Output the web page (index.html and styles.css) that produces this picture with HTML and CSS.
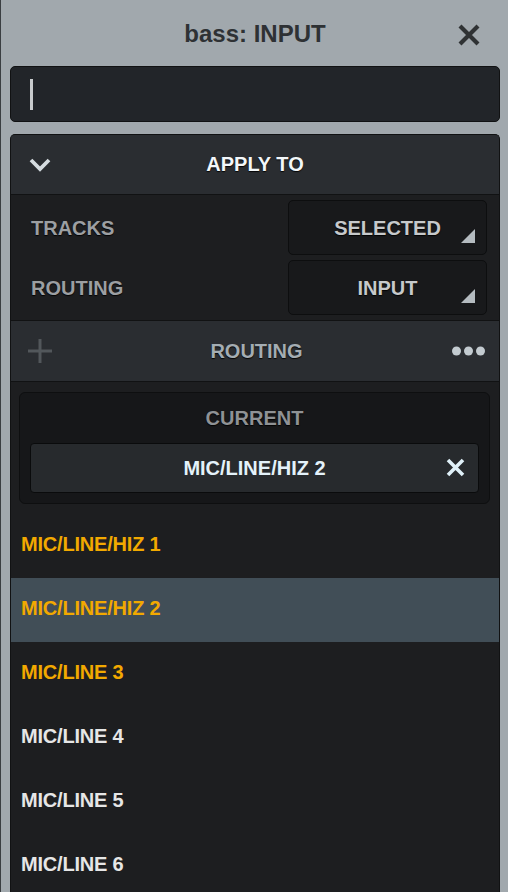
FILE: index.html
```html
<!DOCTYPE html>
<html>
<head>
<meta charset="utf-8">
<link rel="stylesheet" href="styles.css">
</head>
<body>
<div class="app">
  <header class="titlebar">
    <span></span>
    <h1 class="title">bass: INPUT</h1>
    <button class="close" aria-label="Close">
      <svg width="24" height="24" viewBox="0 0 24 24"><path d="M3 3L21 21M21 3L3 21" stroke="#2f3234" stroke-width="4.2" stroke-linecap="butt" fill="none"/></svg>
    </button>
  </header>

  <div class="search"><span class="cursor"></span></div>

  <section class="panel">
    <div class="panel-head">
      <svg class="chev" width="22" height="14" viewBox="0 0 22 14"><path d="M2 2L11 11L20 2" stroke="#d5dce0" stroke-width="3.8" fill="none"/></svg>
      <span class="head-title">APPLY TO</span>
      <span></span>
    </div>

    <div class="apply">
      <span class="label">TRACKS</span>
      <div class="dropdown"><span>SELECTED</span><svg class="tri" width="14" height="14" viewBox="0 0 14 14"><path d="M14 0L14 14L0 14Z" fill="#b4bbc0"/></svg></div>
      <span class="label">ROUTING</span>
      <div class="dropdown"><span>INPUT</span><svg class="tri" width="14" height="14" viewBox="0 0 14 14"><path d="M14 0L14 14L0 14Z" fill="#b4bbc0"/></svg></div>
    </div>

    <div class="routing-head">
      <svg class="plus" width="24" height="24" viewBox="0 0 24 24"><path d="M12 0V24M0 12H24" stroke="#52575b" stroke-width="3" fill="none"/></svg>
      <span class="routing-title">ROUTING</span>
      <svg class="dots" width="33" height="10" viewBox="0 0 33 10"><circle cx="4.5" cy="5" r="4.5" fill="#c3cbd0"/><circle cx="16.5" cy="5" r="4.5" fill="#c3cbd0"/><circle cx="28.5" cy="5" r="4.5" fill="#c3cbd0"/></svg>
    </div>

    <div class="current">
      <div class="current-label">CURRENT</div>
      <div class="current-item">
        <span>MIC/LINE/HIZ 2</span>
        <svg class="x" width="19" height="19" viewBox="0 0 19 19"><path d="M2 2L17 17M17 2L2 17" stroke="#dff0f8" stroke-width="3.6" fill="none"/></svg>
      </div>
    </div>

    <ul class="list">
      <li class="item used">MIC/LINE/HIZ 1</li>
      <li class="item used active">MIC/LINE/HIZ 2</li>
      <li class="item used">MIC/LINE 3</li>
      <li class="item">MIC/LINE 4</li>
      <li class="item">MIC/LINE 5</li>
      <li class="item">MIC/LINE 6</li>
    </ul>
  </section>
</div>
</body>
</html>
```

FILE: styles.css
```css
* { box-sizing: border-box; }

html, body {
  margin: 0;
  padding: 0;
  background: #a1a8ad;
}

body {
  font-family: "Liberation Sans", Arial, sans-serif;
  font-weight: bold;
}

.app {
  width: 508px;
  height: 892px;
  overflow: hidden;
  border-left: 1px solid #3a3e41;
  padding: 0 8px 0 9px;
  display: flex;
  flex-direction: column;
}

.titlebar {
  height: 66px;
  display: grid;
  grid-template-columns: 1fr auto 1fr;
  align-items: center;
}

.title {
  margin: 0;
  font-size: 24px;
  line-height: 28px;
  color: #2e3134;
  padding-top: 2px;
}

.close {
  justify-self: end;
  margin-right: 19px;
  margin-top: 3px;
  background: none;
  border: 0;
  padding: 0;
  width: 24px;
  height: 24px;
  display: flex;
}

.search {
  height: 56px;
  background: #222529;
  border: 1px solid #111213;
  border-radius: 5px;
  display: flex;
  align-items: center;
  padding-left: 19px;
}

.cursor {
  width: 3px;
  height: 31px;
  background: #c8cbcd;
  margin-top: 1px;
}

.panel {
  margin-top: 12px;
  flex: 1;
  border: 1px solid #111213;
  border-bottom: 0;
  border-radius: 5px 5px 0 0;
  background: #1d1e20;
  overflow: hidden;
  display: flex;
  flex-direction: column;
}

.panel-head {
  height: 60px;
  flex: none;
  background: #2a2d31;
  border-bottom: 1px solid #111213;
  display: grid;
  grid-template-columns: 1fr auto 1fr;
  align-items: center;
  padding-left: 18px;
}

.chev { display: block; }

.head-title {
  font-size: 20px;
  color: #f3f7fa;
  text-shadow: 0 1px 1px rgba(0, 0, 0, 0.9);
  padding-right: 18px;
}

.apply {
  flex: none;
  display: grid;
  grid-template-columns: 1fr 199px;
  row-gap: 5px;
  padding: 5px 12px 5px 20px;
  align-items: center;
}

.label {
  font-size: 20px;
  color: #9c9fa2;
  text-shadow: 0 1px 1px rgba(0, 0, 0, 0.9);
  padding-top: 2px;
}

.dropdown {
  position: relative;
  height: 55px;
  background: #18191b;
  border: 1px solid #0d0e0f;
  border-radius: 5px;
  display: flex;
  align-items: center;
  justify-content: center;
  font-size: 20px;
  color: #c6c9cb;
  text-shadow: 0 1px 1px rgba(0, 0, 0, 0.9);
  padding-top: 2px;
}

.tri {
  position: absolute;
  right: 11px;
  bottom: 11px;
}

.routing-head {
  flex: none;
  height: 62px;
  background: #2a2d31;
  border-top: 1px solid #111213;
  border-bottom: 1px solid #111213;
  display: grid;
  grid-template-columns: 1fr auto 1fr;
  align-items: center;
  padding: 0 14px 0 17px;
}

.plus { display: block; }

.routing-title {
  font-size: 20px;
  color: #a4adb3;
  text-shadow: 0 1px 1px rgba(0, 0, 0, 0.9);
}

.dots {
  justify-self: end;
  display: block;
}

.current {
  flex: none;
  margin: 10px 9px 0 8px;
  height: 112px;
  background: #161719;
  border: 1px solid #0e0f10;
  border-radius: 6px;
  padding: 0 10px;
}

.current-label {
  height: 50px;
  line-height: 50px;
  text-align: center;
  font-size: 20px;
  color: #8f9295;
  text-shadow: 0 1px 1px rgba(0, 0, 0, 0.9);
}

.current-item {
  position: relative;
  height: 50px;
  background: #272a2d;
  border: 1px solid #0a0b0c;
  border-radius: 4px;
  display: flex;
  align-items: center;
  justify-content: center;
  font-size: 20px;
  color: #e4f2fa;
}

.current-item .x {
  position: absolute;
  right: 13px;
  top: 14px;
}

.list {
  list-style: none;
  margin: 10px 0 0 0;
  padding: 0;
}

.item {
  height: 64px;
  display: flex;
  align-items: center;
  padding: 0 0 3px 10px;
  font-size: 20px;
  letter-spacing: -0.2px;
  color: #e6e6e6;
}

.item.used { color: #f2a900; }

.item.active { background: #414e57; }
```
